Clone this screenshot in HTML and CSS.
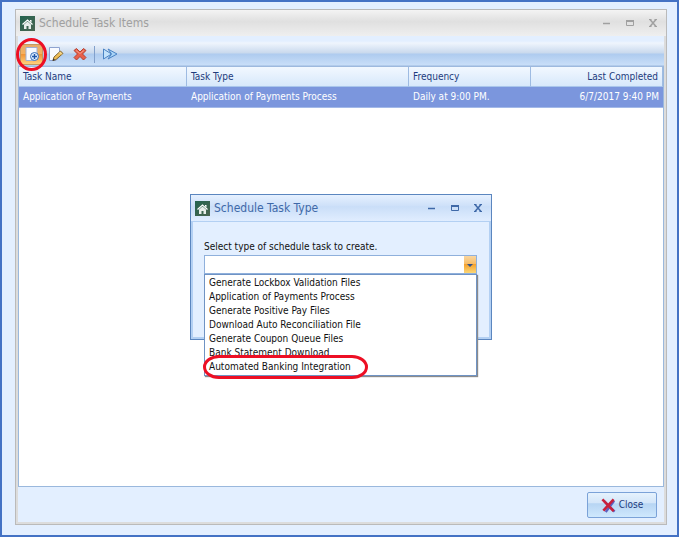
FILE: index.html
```html
<!DOCTYPE html>
<html lang="en">

<head>
    <meta charset="UTF-8" />
    <meta name="viewport" content="width=device-width, initial-scale=1.0" />
    <title>Schedule Task Items</title>
    <link rel="stylesheet" href="styles.css">
</head>

<body>
    <svg width="0" height="0" class="defs" aria-hidden="true">
        <defs>
            <linearGradient id="green" x1="0" y1="0" x2="1" y2="1">
                <stop offset="0" stop-color="#23644f" />
                <stop offset="1" stop-color="#4a6450" />
            </linearGradient>
            <symbol id="home" viewBox="0 0 15 15">
                <rect width="15" height="15" fill="url(#green)" />
                <path d="M4 8.500v4.500h2.500v-3h2v3H11V8.500L7.500 5.500z" fill="#e8eeea" />
                <path d="M2.500 8.500L7.500 4l5 4.500" fill="none" stroke="#fff" stroke-width="1.200" />
                <path d="M10 4h1.500v2.500L10 5.300z" fill="#fff" />
            </symbol>
            <symbol id="winmin" viewBox="0 0 10 10">
                <path d="M1 5.500h7" stroke="currentColor" stroke-width="1.500" />
            </symbol>
            <symbol id="winmax" viewBox="0 0 10 10">
                <path d="M1.500 2.500h7v5h-7z" fill="none" stroke="currentColor" />
                <path d="M1 3h8" stroke="currentColor" stroke-width="2" />
            </symbol>
            <symbol id="winclose" viewBox="0 0 10 10">
                <path d="M2 1.500l6 7M8 1.500l-6 7" stroke="currentColor" stroke-width="1.500" />
                <path d="M1 1.500h2.500M6.500 1.500H9M1 8.500h2.500M6.500 8.500H9" stroke="currentColor" />
            </symbol>
        </defs>
    </svg>

    <main class="window">
        <header class="titlebar">
            <svg class="logo"><use href="#home" /></svg>
            <h1>Schedule Task Items</h1>
            <div class="controls">
                <button aria-label="Minimize"><svg><use href="#winmin" /></svg></button>
                <button aria-label="Maximize"><svg><use href="#winmax" /></svg></button>
                <button aria-label="Close window"><svg><use href="#winclose" /></svg></button>
            </div>
        </header>

        <div class="content">
            <div class="toolbar">
                <button class="tool active" aria-label="New">
                    <svg viewBox="0 0 16 16">
                        <path d="M2 1.500h11v10l-3 3H2z" fill="#f8faff" stroke="#9fb0d4" />
                        <circle cx="10.500" cy="10.500" r="4" fill="#dcecff" stroke="#3b6fb5" />
                        <path d="M8 10.500h5M10.500 8v5" stroke="#2458a8" stroke-width="1.400" />
                    </svg>
                    <span class="ring"></span>
                </button>
                <button class="tool" aria-label="Edit">
                    <svg viewBox="0 0 16 16">
                        <path d="M1.500 1.500h10v9l-3.500 4H1.500z" fill="#f8faff" stroke="#8fa3d0" />
                        <path d="M5 14.500l1-3.500 6.500-6 2.500 2.500-7 6z" fill="#efbd55" stroke="#7d6537" />
                        <path d="M11.500 6l2.500 2.500" stroke="#fff0b8" />
                        <path d="M4.500 15l.800-2.500 1.700 1.500z" fill="#333" />
                    </svg>
                </button>
                <button class="tool" aria-label="Delete">
                    <svg viewBox="0 0 16 16">
                        <path d="M4.500 2.500L8 6l3.500-3.500 2.500 2L10.500 8l3.500 3.500-2.500 2.500L8 10.500 4.500 14 2 11.500 5.500 8 2 4.500z" fill="#e8604c" stroke="#b5402f" />
                        <path d="M4 4.500l4 3 4-3" fill="none" stroke="#f59a85" />
                    </svg>
                </button>
                <span class="divider"></span>
                <button class="tool" aria-label="Run">
                    <svg viewBox="0 0 16 16">
                        <path d="M1.500 3l8 5-8 5z" fill="#c3e2fb" stroke="#4a83c4" />
                        <path d="M6 3l9 5-9 5L9.500 8z" fill="#a9d3f6" stroke="#4a83c4" />
                    </svg>
                </button>
            </div>

            <div class="grid">
                <table>
                    <thead>
                        <tr>
                            <th class="name">Task Name</th>
                            <th class="type">Task Type</th>
                            <th class="freq">Frequency</th>
                            <th class="last">Last Completed</th>
                        </tr>
                    </thead>
                    <tbody>
                        <tr>
                            <td>Application of Payments</td>
                            <td>Application of Payments Process</td>
                            <td>Daily at 9:00 PM.</td>
                            <td class="last">6/7/2017 9:40 PM</td>
                        </tr>
                    </tbody>
                </table>
            </div>

            <footer class="footer">
                <button class="close">
                    <svg viewBox="0 0 16 16">
                        <path d="M3.500 3.500l11 11M14 3l-9 12" stroke="#5a5fc0" stroke-width="2.500" />
                        <path d="M1.500 1.500l12 12.500M13.500 1.500l-11 12" stroke="#c8203c" stroke-width="2.800" />
                    </svg>
                    Close
                </button>
            </footer>
        </div>

        <div class="overlay">
            <section class="dialog">
                <header class="titlebar">
                    <svg class="logo"><use href="#home" /></svg>
                    <h2>Schedule Task Type</h2>
                    <div class="controls">
                        <button aria-label="Minimize"><svg><use href="#winmin" /></svg></button>
                        <button aria-label="Maximize"><svg><use href="#winmax" /></svg></button>
                        <button aria-label="Close dialog"><svg><use href="#winclose" /></svg></button>
                    </div>
                </header>
                <div class="body">
                    <label for="tasktype">Select type of schedule task to create.</label>
                    <div class="combo">
                        <select id="tasktype">
                            <option></option>
                        </select>
                        <span class="arrow"></span>
                        <ul class="list" role="listbox" aria-label="Task types">
                            <li role="option">Generate Lockbox Validation Files</li>
                            <li role="option">Application of Payments Process</li>
                            <li role="option">Generate Positive Pay Files</li>
                            <li role="option">Download Auto Reconciliation File</li>
                            <li role="option">Generate Coupon Queue Files</li>
                            <li role="option">Bank Statement Download</li>
                            <li role="option" class="marked">Automated Banking Integration</li>
                        </ul>
                    </div>
                </div>
            </section>
        </div>
    </main>
</body>

</html>
```
FILE: styles.css
```css
* {
    box-sizing: border-box;
    margin: 0;
    padding: 0;
}

body {
    display: flex;
    min-height: 100vh;
    padding: 7px 10px 10px 13px;
    border: 2px solid #4472c4;
    background: #e3efff;
    font: 10px/14px Tahoma, "DejaVu Sans Condensed", "DejaVu Sans", sans-serif;
    color: #111;
}

button,
select {
    border: 0;
    background: none;
    font: inherit;
    color: inherit;
}

.defs {
    position: absolute;
}

.window {
    position: relative;
    display: flex;
    flex-direction: column;
    flex: 1;
    border: 1px solid #bababa;
    background: #dcdcdc;
}

.titlebar {
    display: flex;
    align-items: center;
    height: 26px;
    padding: 0 8px 0 4px;
    gap: 4px;
    background: linear-gradient(#f4f4f4, #e6e6e6 30%, #e0e0e0 45%, #efefef);
    color: #a0a0a0;
}

.titlebar h1,
.titlebar h2 {
    flex: 1;
    font-size: 12px;
    font-weight: normal;
}

.logo {
    width: 15px;
    height: 15px;
}

.controls {
    display: flex;
    gap: 13px;
}

.controls button,
.controls svg {
    display: block;
    width: 10px;
    height: 10px;
}

.content {
    display: flex;
    flex-direction: column;
    flex: 1;
    margin: 0 2px 2px;
    background: #e3efff;
}

.toolbar {
    display: flex;
    align-items: center;
    height: 31px;
    padding: 5px 2px 0;
    gap: 1px;
    background: linear-gradient(#e3efff 5px, #eff5fd 7px, #c9d9ed 17px, #aecbef 18px, #c8def8 29px, #9db9de 30px);
}

.tool {
    position: relative;
    display: flex;
    align-items: center;
    justify-content: center;
    width: 23px;
    height: 21px;
}

.tool svg {
    width: 16px;
    height: 16px;
}

.tool.active {
    border: 1px solid #c39a62;
    background: linear-gradient(#e5ad6b, #f6b05d 45%, #f29536 50%, #ffd07c);
}

.ring {
    position: absolute;
    inset: -7px -5px;
    border: 3px solid #ed0f24;
    border-radius: 50%;
}

.divider {
    width: 1px;
    height: 17px;
    margin: 0 2px;
    background: #82a0cb;
}

.grid {
    flex: 1;
    border: 1px solid #9ab8dd;
    border-top: 0;
    background: #fff;
}

table {
    width: 100%;
    border-collapse: separate;
    border-spacing: 0;
    table-layout: fixed;
}

th {
    height: 20px;
    padding: 0 4px;
    border-right: 1px solid #9ebbe2;
    border-bottom: 1px solid #a9c6ec;
    background: linear-gradient(#f2f8ff, #d7e8fb);
    color: #1e3c7d;
    font-weight: normal;
    text-align: left;
}

td {
    height: 21px;
    padding: 0 4px;
    border-bottom: 1px solid #a3b9e8;
    background: #7b96dd;
    color: #fff;
}

th.last,
td.last {
    text-align: right;
}

.name {
    width: 168px;
}

.type {
    width: 222px;
}

.freq {
    width: 122px;
}

.footer {
    display: flex;
    justify-content: flex-end;
    padding: 5px 7px 4px;
}

.close {
    display: flex;
    align-items: center;
    justify-content: center;
    width: 70px;
    height: 26px;
    gap: 3px;
    border: 1px solid #7ba2d8;
    border-radius: 2px;
    background: linear-gradient(#e6f2fd, #d4e6f9 40%, #b7d5f3 45%, #cfe8fd);
    color: #1e3c7d;
}

.close svg {
    width: 15px;
    height: 15px;
}

.overlay {
    position: absolute;
    inset: 0;
    display: grid;
    place-items: center;
}

.dialog {
    width: 302px;
    border: 1px solid #5b86bf;
    background: #b3d0f3;
}

.dialog .titlebar {
    background: linear-gradient(#e6f1ff, #cfe1f9 40%, #cadef8 45%, #e0edff);
    color: #3f69a8;
}

.dialog .body {
    min-height: 116px;
    margin: 0 2px 2px;
    padding: 18px 12px 18px 11px;
    border-top: 1px solid #b3d0f3;
    background: #e3efff;
}

.dialog label {
    display: block;
    margin-bottom: 1px;
}

.combo {
    position: relative;
}

.combo select {
    display: block;
    width: 100%;
    height: 19px;
    border: 1px solid #8fb0dc;
    background: #fff;
    appearance: none;
}

.arrow {
    position: absolute;
    top: 1px;
    right: 1px;
    width: 12px;
    height: 17px;
    background: linear-gradient(#f9d6a0, #f8bd68 45%, #f5a22e 50%, #fbd777);
    pointer-events: none;
}

.arrow::after {
    content: "";
    position: absolute;
    top: 8px;
    left: 3px;
    border: 3px solid transparent;
    border-top-color: #33538c;
    border-bottom: 0;
}

.list {
    position: absolute;
    top: 100%;
    left: 0;
    right: 0;
    padding: 1px 0;
    border: 1px solid #6f93c4;
    background: #fff;
    box-shadow: 1px 1px 1px #8b8b8b;
    list-style: none;
}

.list li {
    padding: 0 4px;
}

.marked {
    position: relative;
}

.marked::after {
    content: "";
    position: absolute;
    inset: -5px auto -5px -2px;
    width: 159px;
    border: 3px solid #ed0f24;
    border-radius: 16px / 12px;
}
```
